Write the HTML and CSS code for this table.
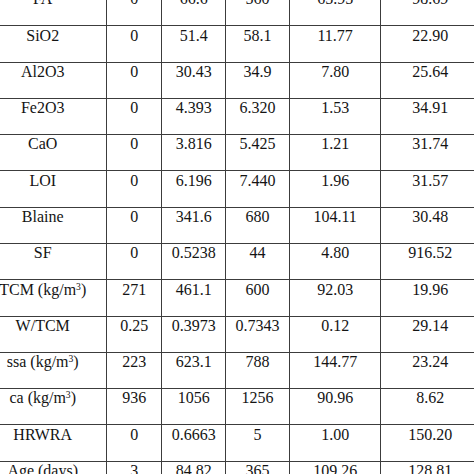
FILE: index.html
```html
<!DOCTYPE html>
<html>
<head>
<meta charset="utf-8">
<link rel="stylesheet" href="styles.css">
</head>
<body>
<div class="sheet">
  <div class="grid">
    <div class="c">FA</div><div class="c">0</div><div class="c">66.6</div><div class="c">560</div><div class="c">65.95</div><div class="c">98.69</div>
    <div class="c">SiO2</div><div class="c">0</div><div class="c">51.4</div><div class="c">58.1</div><div class="c">11.77</div><div class="c">22.90</div>
    <div class="c">Al2O3</div><div class="c">0</div><div class="c">30.43</div><div class="c">34.9</div><div class="c">7.80</div><div class="c">25.64</div>
    <div class="c">Fe2O3</div><div class="c">0</div><div class="c">4.393</div><div class="c">6.320</div><div class="c">1.53</div><div class="c">34.91</div>
    <div class="c">CaO</div><div class="c">0</div><div class="c">3.816</div><div class="c">5.425</div><div class="c">1.21</div><div class="c">31.74</div>
    <div class="c">LOI</div><div class="c">0</div><div class="c">6.196</div><div class="c">7.440</div><div class="c">1.96</div><div class="c">31.57</div>
    <div class="c">Blaine</div><div class="c">0</div><div class="c">341.6</div><div class="c">680</div><div class="c">104.11</div><div class="c">30.48</div>
    <div class="c">SF</div><div class="c">0</div><div class="c">0.5238</div><div class="c">44</div><div class="c">4.80</div><div class="c">916.52</div>
    <div class="c">TCM (kg/m<sup>3</sup>)</div><div class="c">271</div><div class="c">461.1</div><div class="c">600</div><div class="c">92.03</div><div class="c">19.96</div>
    <div class="c">W/TCM</div><div class="c">0.25</div><div class="c">0.3973</div><div class="c">0.7343</div><div class="c">0.12</div><div class="c">29.14</div>
    <div class="c">ssa (kg/m<sup>3</sup>)</div><div class="c">223</div><div class="c">623.1</div><div class="c">788</div><div class="c">144.77</div><div class="c">23.24</div>
    <div class="c">ca (kg/m<sup>3</sup>)</div><div class="c">936</div><div class="c">1056</div><div class="c">1256</div><div class="c">90.96</div><div class="c">8.62</div>
    <div class="c">HRWRA</div><div class="c">0</div><div class="c">0.6663</div><div class="c">5</div><div class="c">1.00</div><div class="c">150.20</div>
    <div class="c">Age (days)</div><div class="c">3</div><div class="c">84.82</div><div class="c">365</div><div class="c">109.26</div><div class="c">128.81</div>
  </div>
</div>
</body>
</html>
```

FILE: styles.css
```css
html, body {
  margin: 0;
  padding: 0;
  background: #ffffff;
  overflow: hidden;
}
.sheet {
  width: 474px;
  height: 474px;
  overflow: hidden;
}
.grid {
  display: grid;
  grid-template-columns: 128px 55px 64px 63.6px 91.7px 98.6px;
  grid-auto-rows: 36.3px;
  margin-left: -20.8px;
  margin-top: -10.1px;
  width: max-content;
  font-family: "Liberation Serif", "Times New Roman", serif;
  font-size: 16px;
  line-height: 18px;
  color: #141414;
}
.c {
  box-sizing: border-box;
  border-right: 1px solid #3c3c3c;
  border-bottom: 1px solid #3c3c3c;
  text-align: center;
  padding-top: 0.3px;
  white-space: nowrap;
}
.c sup {
  font-size: 0.6em;
  line-height: 0;
  vertical-align: 0.55em;
}
```
